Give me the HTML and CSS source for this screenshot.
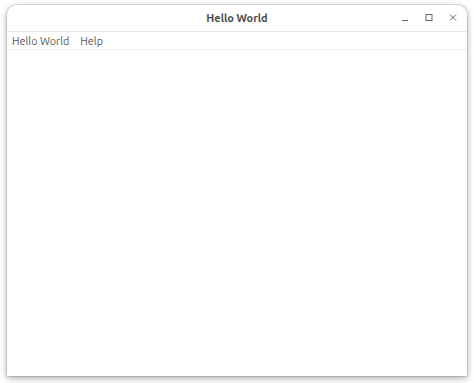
FILE: index.html
```html
<!DOCTYPE html>
<html lang="en">
<head>
    <meta charset="UTF-8">
    <meta name="viewport" content="width=device-width, initial-scale=1.0">
    <title>Hello World</title>
    <link rel="stylesheet" href="styles.css">
</head>
<body>

    <!-- WINDOW -->
    <div class="window">
        <div class="titlebar">
            <span class="title">Hello World</span>
            <div class="controls">
                <span class="ctl">
                    <svg width="10" height="10" viewBox="0 0 10 10"><path d="M2 7.5h6" stroke="#666" stroke-width="1"/></svg>
                </span>
                <span class="ctl">
                    <svg width="10" height="10" viewBox="0 0 10 10"><rect x="2" y="1.5" width="6" height="6" fill="none" stroke="#666" stroke-width="1"/></svg>
                </span>
                <span class="ctl">
                    <svg width="10" height="10" viewBox="0 0 10 10"><path d="M2 1.5l6 6M8 1.5l-6 6" stroke="#666" stroke-width="1"/></svg>
                </span>
            </div>
        </div>

        <div class="menubar">
            <span class="menu-item">Hello World</span>
            <span class="menu-item">Help</span>
        </div>

        <div class="content"></div>
    </div>

</body>
</html>
```

FILE: styles.css
```css
* {
    margin: 0;
    padding: 0;
    box-sizing: border-box;
    font-family: Ubuntu, "Noto Sans", "DejaVu Sans", sans-serif;
}

body {
    width: 474px;
    height: 383px;
    background: #ffffff;
    padding: 5px 7px 7px 7px;
    overflow: hidden;
}

.window {
    height: 371px;
    display: flex;
    flex-direction: column;
    background: #ffffff;
    border-radius: 10px 10px 0 0;
    box-shadow: 0 0 0 1px rgba(0, 0, 0, 0.1), 0 2px 7px rgba(0, 0, 0, 0.35);
    overflow: hidden;
}

/* TITLE BAR */
.titlebar {
    height: 27px;
    position: relative;
    display: flex;
    justify-content: center;
    align-items: center;
    background: #ffffff;
    border-bottom: 1px solid #e8e8e8;
}

.title {
    font-size: 11px;
    font-weight: bold;
    color: #4a4a4a;
}

.controls {
    position: absolute;
    right: 4px;
    top: 0;
    height: 100%;
    display: flex;
    align-items: center;
    gap: 4px;
}

.ctl {
    width: 20px;
    height: 20px;
    display: flex;
    justify-content: center;
    align-items: center;
}

/* MENU BAR */
.menubar {
    height: 18px;
    display: flex;
    align-items: center;
    gap: 11px;
    padding-left: 5px;
    border-bottom: 1px solid #efefef;
}

.menu-item {
    font-size: 10.8px;
    color: #555555;
}

.content {
    flex: 1;
    background: #ffffff;
}
```
